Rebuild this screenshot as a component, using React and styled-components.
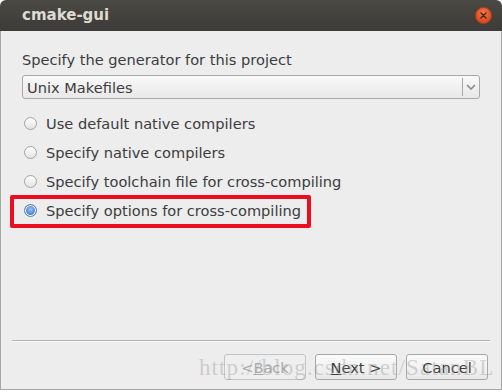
import styled, { createGlobalStyle } from "styled-components";

const GlobalStyle = createGlobalStyle`
  html, body {
    margin: 0;
    padding: 0;
    background: #ffffff;
  }
  body {
    font-family: "DejaVu Sans", "Liberation Sans", sans-serif;
  }
`;

const Window = styled.div`
  width: 502px;
  height: 390px;
  display: flex;
  flex-direction: column;
  position: relative;
  overflow: hidden;
`;

const TitleBar = styled.div`
  height: 31px;
  flex: none;
  display: flex;
  align-items: center;
  justify-content: space-between;
  padding: 0 10px 0 22px;
  background: linear-gradient(#4a4944, #3c3b37);
  border-radius: 6px 6px 0 0;
  box-sizing: border-box;
`;

const Title = styled.span`
  color: #dfdbd2;
  font-size: 15px;
  font-weight: bold;
  margin-top: -2px;
`;

const CloseButton = styled.div`
  width: 17px;
  height: 17px;
  border-radius: 50%;
  box-sizing: border-box;
  background: radial-gradient(circle at 50% 35%, #f27a52, #dc4a1f 70%);
  border: 1px solid #b23f16;
  display: flex;
  align-items: center;
  justify-content: center;
  margin-top: -1px;
`;

const Body = styled.div`
  flex: 1;
  display: flex;
  flex-direction: column;
  background: #ededed;
  border: 1px solid #a7a7a7;
  border-top: none;
`;

const Content = styled.div`
  flex: 1;
  padding: 20px 21px 0 21px;
  color: #3c3c3c;
  font-size: 14.6px;
`;

const Label = styled.div`
  line-height: 18px;
  height: 18px;
`;

const Combo = styled.div`
  margin-top: 6px;
  height: 24px;
  box-sizing: border-box;
  border: 1px solid #a9a9a9;
  border-radius: 3px;
  background: linear-gradient(#f9f9f9, #e8e8e8);
  display: flex;
  align-items: center;
`;

const ComboText = styled.span`
  flex: 1;
  padding-left: 4px;
`;

const ComboArrow = styled.div`
  width: 16px;
  height: 18px;
  border-left: 1px solid #a9a9a9;
  display: flex;
  align-items: center;
  justify-content: center;
`;

const RadioList = styled.div`
  margin-top: 10px;
  display: flex;
  flex-direction: column;
  align-items: flex-start;
`;

const RadioRow = styled.div`
  position: relative;
  height: 29px;
  display: flex;
  align-items: center;
  padding-left: 2px;
  gap: 9px;
  ${(p) =>
    p.marked &&
    `
    &::after {
      content: "";
      position: absolute;
      left: -12px;
      right: -10px;
      top: -1px;
      bottom: -3px;
      border: 4px solid #eb0d22;
      border-radius: 2px;
    }
  `}
`;

const RadioCircle = styled.span`
  width: 13px;
  height: 13px;
  box-sizing: border-box;
  border-radius: 50%;
  border: 1px solid ${(p) => (p.checked ? "#5f7fa8" : "#a3a3a3")};
  background: ${(p) =>
    p.checked
      ? "radial-gradient(circle at 50% 40%, #9cc4f2, #4a86d6 55%, #3a6fb8)"
      : "linear-gradient(#ffffff, #e3e3e3)"};
  box-shadow: ${(p) => (p.checked ? "inset 0 0 0 1px #ffffff" : "none")};
`;

const Separator = styled.div`
  margin: 0 11px;
  border-top: 1px solid #b3b3b3;
  border-bottom: 1px solid #fafafa;
`;

const ButtonRow = styled.div`
  display: flex;
  justify-content: flex-end;
  gap: 9px;
  padding: 12px 13px 9px;
`;

const Button = styled.div`
  width: 82px;
  height: 26px;
  box-sizing: border-box;
  border: 1px solid ${(p) => (p.disabled ? "#c4c4c4" : "#a8a8a8")};
  border-radius: 3px;
  background: ${(p) =>
    p.disabled ? "#efefef" : "linear-gradient(#fbfbfb, #e9e9e9)"};
  color: ${(p) => (p.disabled ? "#a9a9a9" : "#3c3c3c")};
  font-size: 14.6px;
  display: flex;
  align-items: center;
  justify-content: center;
`;

const Mnemonic = styled.span`
  text-decoration: underline;
`;

const Watermark = styled.div`
  position: absolute;
  left: 199px;
  top: 355px;
  font-family: "Liberation Serif", serif;
  font-size: 23px;
  letter-spacing: 1.1px;
  color: rgba(150, 150, 150, 0.4);
  white-space: nowrap;
  pointer-events: none;
`;

const options = [
  "Use default native compilers",
  "Specify native compilers",
  "Specify toolchain file for cross-compiling",
  "Specify options for cross-compiling",
];

export default function App() {
  return (
    <>
      <GlobalStyle />
      <Window>
        <TitleBar>
          <Title>cmake-gui</Title>
          <CloseButton>
            <svg width="7" height="7" viewBox="0 0 7 7">
              <path
                d="M1 1 L6 6 M6 1 L1 6"
                stroke="#3b2418"
                strokeWidth="1.3"
                strokeLinecap="round"
              />
            </svg>
          </CloseButton>
        </TitleBar>
        <Body>
          <Content>
            <Label>Specify the generator for this project</Label>
            <Combo>
              <ComboText>Unix Makefiles</ComboText>
              <ComboArrow>
                <svg width="10" height="6" viewBox="0 0 10 6">
                  <path
                    d="M1 1 L5 5 L9 1"
                    fill="none"
                    stroke="#8a8a8a"
                    strokeWidth="1.6"
                  />
                </svg>
              </ComboArrow>
            </Combo>
            <RadioList>
              {options.map((o, i) => (
                <RadioRow key={o} marked={i === 3}>
                  <RadioCircle checked={i === 3} />
                  <span>{o}</span>
                </RadioRow>
              ))}
            </RadioList>
          </Content>
          <Separator />
          <ButtonRow>
            <Button disabled>
              &lt; <Mnemonic>B</Mnemonic>ack
            </Button>
            <Button>
              <Mnemonic>N</Mnemonic>ext &gt;
            </Button>
            <Button>Cancel</Button>
          </ButtonRow>
        </Body>
        <Watermark>http://blog.csdn.net/SatanBL</Watermark>
      </Window>
    </>
  );
}
